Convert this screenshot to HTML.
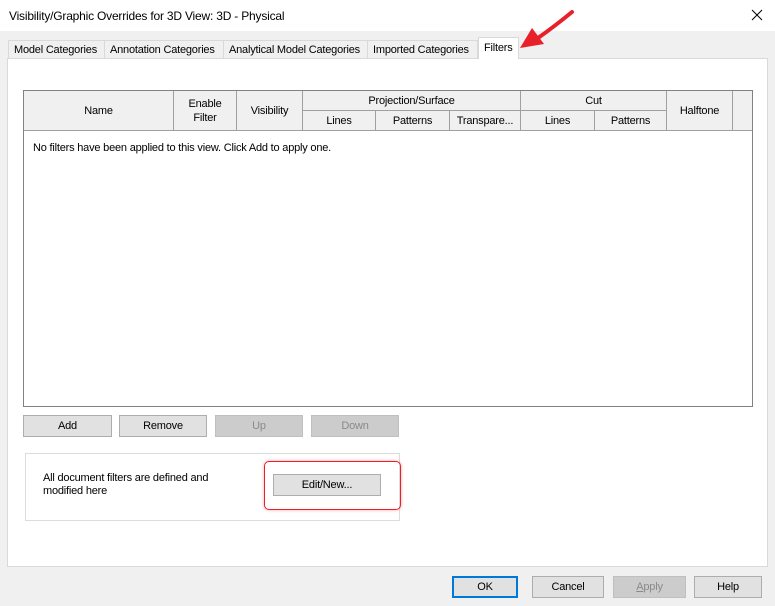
<!DOCTYPE html>
<html><head><style>
*{margin:0;padding:0;box-sizing:border-box}
body{width:775px;height:606px;background:#f0f0f0;font-family:"Liberation Sans",sans-serif;font-size:11px;letter-spacing:-0.2px;color:#000;position:relative;overflow:hidden}
.a{position:absolute;white-space:nowrap}
.btn{position:absolute;background:#e1e1e1;border:1px solid #adadad;text-align:center;line-height:20px}
.dis{background:#cccccc;border-color:#bfbfbf;color:#8a8a8a}
.h{position:absolute;border-right:1px solid #a0a0a0;border-bottom:1px solid #a0a0a0;display:flex;align-items:center;justify-content:center;text-align:center;line-height:14px;white-space:nowrap}
.tab{position:absolute;top:40px;height:19px;border:1px solid #d9d9d9;border-right:none;background:#f0f0f0;padding:0 5px;line-height:18px;white-space:nowrap;overflow:hidden}
</style></head><body>
<div class="a" style="left:0;top:0;width:775px;height:31px;background:#fff"></div>
<div class="a" style="left:9px;top:9px;font-size:12px">Visibility/Graphic Overrides for 3D View: 3D - Physical</div>
<svg class="a" style="left:751px;top:9px" width="12" height="12" viewBox="0 0 12 12"><path d="M1 1L11 11M11 1L1 11" stroke="#000" stroke-width="1"/></svg>

<div class="a" style="left:7px;top:58px;width:761px;height:509px;background:#fff;border:1px solid #d9d9d9"></div>
<div class="tab" style="left:8px;width:96px">Model Categories</div>
<div class="tab" style="left:104px;width:119px">Annotation Categories</div>
<div class="tab" style="left:223px;width:144px">Analytical Model Categories</div>
<div class="tab" style="left:367px;width:111px;border-right:1px solid #d9d9d9">Imported Categories</div>
<div class="tab" style="left:478px;top:37px;height:22px;width:41px;background:#fff;border-right:1px solid #d9d9d9;border-bottom:none;line-height:20px">Filters</div>

<div class="a" style="left:23px;top:90px;width:730px;height:317px;border:1px solid #828282;background:#fff"></div>
<div class="a" style="left:24px;top:91px;width:728px;height:40px;background:#f0f0f0"></div>
<div class="h" style="left:24px;top:91px;width:150px;height:40px">Name</div>
<div class="h" style="left:174px;top:91px;width:63px;height:40px">Enable<br>Filter</div>
<div class="h" style="left:237px;top:91px;width:66px;height:40px">Visibility</div>
<div class="h" style="left:303px;top:91px;width:218px;height:20px">Projection/Surface</div>
<div class="h" style="left:303px;top:111px;width:73px;height:20px">Lines</div>
<div class="h" style="left:376px;top:111px;width:74px;height:20px">Patterns</div>
<div class="h" style="left:450px;top:111px;width:71px;height:20px">Transpare...</div>
<div class="h" style="left:521px;top:91px;width:146px;height:20px">Cut</div>
<div class="h" style="left:521px;top:111px;width:74px;height:20px">Lines</div>
<div class="h" style="left:595px;top:111px;width:72px;height:20px">Patterns</div>
<div class="h" style="left:667px;top:91px;width:66px;height:40px">Halftone</div>
<div class="h" style="left:733px;top:91px;width:19px;height:40px;border-right:none"></div>
<div class="a" style="left:33px;top:142px">No filters have been applied to this view. Click Add to apply one.</div>

<div class="btn" style="left:23px;top:415px;width:89px;height:22px">Add</div>
<div class="btn" style="left:119px;top:415px;width:88px;height:22px">Remove</div>
<div class="btn dis" style="left:215px;top:415px;width:88px;height:22px">Up</div>
<div class="btn dis" style="left:311px;top:415px;width:88px;height:22px">Down</div>

<div class="a" style="left:25px;top:453px;width:375px;height:68px;border:1px solid #dcdcdc"></div>
<div class="a" style="left:43px;top:472px;line-height:13px">All document filters are defined and<br>modified here</div>
<div class="a" style="left:264px;top:461px;width:137px;height:49px;border:1.5px solid #e8202a;border-radius:5px;box-shadow:0 0 3px rgba(232,32,42,.4)"></div>
<div class="btn" style="left:273px;top:474px;width:108px;height:22px">Edit/New...</div>

<div class="btn" style="left:452px;top:576px;width:66px;height:22px;border:2px solid #0078d7;line-height:18px">OK</div>
<div class="btn" style="left:532px;top:576px;width:72px;height:22px">Cancel</div>
<div class="btn dis" style="left:613px;top:576px;width:73px;height:22px"><u>A</u>pply</div>
<div class="btn" style="left:694px;top:576px;width:68px;height:22px">Help</div>

<svg class="a" style="left:510px;top:8px" width="70" height="48" viewBox="0 0 70 48">
<path d="M62 4 Q45 18 28 30" stroke="#e8202a" stroke-width="4" fill="none" stroke-linecap="round"/>
<polygon points="10,40 22,20 34,36" fill="#e8202a"/>
</svg>
</body></html>
